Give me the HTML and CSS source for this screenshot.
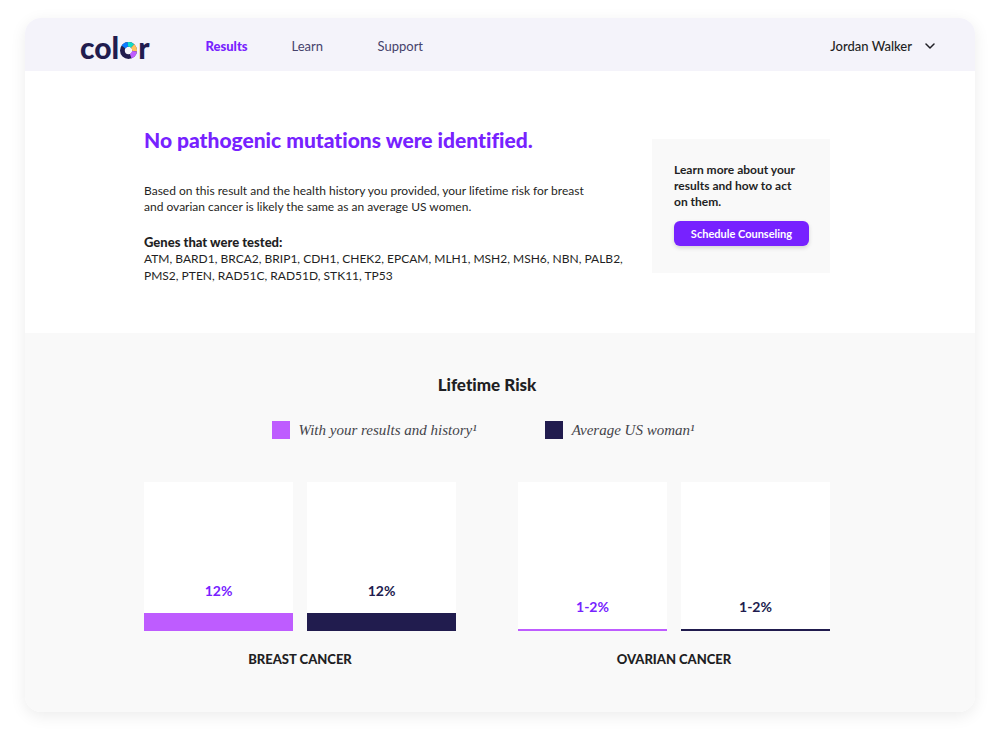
FILE: index.html
```html
<!DOCTYPE html>
<html lang="en">
<head>
    <meta charset="UTF-8">
    <meta name="viewport" content="width=device-width, initial-scale=1.0">
    <title>Color - Results</title>
    <link rel="stylesheet" href="styles.css">
</head>
<body>
    <div class="window">
        <header class="topbar">
            <a href="#" class="logo">
                <span>col</span>
                <svg class="logo-ring" viewBox="0 0 17 17" fill="none" stroke-width="4.8">
                    <circle cx="8.5" cy="8.5" r="6.1" stroke="#211c4e"/>
                    <path d="M3.5 5A6.1 6.1 0 0 1 7.9 2.43" stroke="#0a7cff"/>
                    <path d="M7.9 2.43A6.1 6.1 0 0 1 12.6 4" stroke="#12dcc8"/>
                    <path d="M12.6 4A6.1 6.1 0 0 1 14.55 9.3" stroke="#ffc25c"/>
                    <path d="M14.55 9.3A6.1 6.1 0 0 1 10.7 14.2" stroke="#c05cff"/>
                </svg>
                <span>r</span>
            </a>
            <nav class="nav">
                <a href="#" class="active">Results</a>
                <a href="#">Learn</a>
                <a href="#">Support</a>
            </nav>
            <button class="user" type="button">
                Jordan Walker
                <svg class="chevron" viewBox="0 0 10 6" fill="none" stroke="currentColor" stroke-width="1.5" stroke-linecap="round" stroke-linejoin="round">
                    <path d="M1 1l4 4 4-4"/>
                </svg>
            </button>
        </header>

        <section class="result">
            <div class="result-text">
                <h1>No pathogenic mutations were identified.</h1>
                <p>Based on this result and the health history you provided, your lifetime risk for breast<br> and ovarian cancer is likely the same as an average US women.</p>
                <h2>Genes that were tested:</h2>
                <p class="genes">ATM, BARD1, BRCA2, BRIP1, CDH1, CHEK2, EPCAM, MLH1, MSH2, MSH6, NBN, PALB2,<br> PMS2, PTEN, RAD51C, RAD51D, STK11, TP53</p>
            </div>
            <aside class="card">
                <p>Learn more about your results and how to act on them.</p>
                <button class="btn" type="button">Schedule Counseling</button>
            </aside>
        </section>

        <section class="risk">
            <h2>Lifetime Risk</h2>
            <ul class="legend">
                <li><span class="swatch yours"></span>With your results and history¹</li>
                <li><span class="swatch average"></span>Average US woman¹</li>
            </ul>
            <div class="charts">
                <figure>
                    <div class="tiles">
                        <div class="tile">
                            <span class="value">12%</span>
                            <div class="bar yours" style="height: 18px"></div>
                        </div>
                        <div class="tile">
                            <span class="value dark">12%</span>
                            <div class="bar average" style="height: 18px"></div>
                        </div>
                    </div>
                    <figcaption>BREAST CANCER</figcaption>
                </figure>
                <figure>
                    <div class="tiles">
                        <div class="tile">
                            <span class="value">1-2%</span>
                            <div class="bar yours" style="height: 2px"></div>
                        </div>
                        <div class="tile">
                            <span class="value dark">1-2%</span>
                            <div class="bar average" style="height: 2px"></div>
                        </div>
                    </div>
                    <figcaption>OVARIAN CANCER</figcaption>
                </figure>
            </div>
        </section>
    </div>
</body>
</html>
```
FILE: styles.css
```css
:root {
    --purple: #7722ff;
    --orchid: #be5cff;
    --navy: #211c4e;
    --ink: #1f1f24;
    --grey-bg: #f9f9f9;
}

* {
    margin: 0;
    padding: 0;
    box-sizing: border-box;
}

body {
    background: #fff;
    color: var(--ink);
    font-family: Lato, "Liberation Sans", sans-serif;
    font-size: 12px;
    font-variant-ligatures: none;
    line-height: 16px;
    padding: 18px 25px 31px;
}

a {
    text-decoration: none;
}

button {
    font-family: inherit;
    border: none;
    cursor: pointer;
}

.window {
    border-radius: 16px;
    overflow: hidden;
    box-shadow: 0 4px 16px rgba(0, 0, 0, 0.08);
}

/* Top bar */
.topbar {
    display: flex;
    align-items: center;
    height: 53px;
    padding: 0 40px 0 55px;
    background: #f4f3fa;
}

.logo {
    display: flex;
    align-items: baseline;
    color: var(--navy);
    font-size: 30px;
    font-weight: 900;
    line-height: 40px;
    padding-top: 4px;
}

.logo-ring {
    width: 17px;
    height: 17px;
    margin: 0 1px;
}

.nav {
    display: flex;
    margin-left: 56px;
    padding-top: 3px;
}

.nav a {
    width: 86px;
    color: #46426b;
    font-size: 13px;
}

.nav .active {
    color: var(--purple);
    font-weight: 900;
}

.user {
    display: flex;
    align-items: center;
    gap: 13px;
    margin-left: auto;
    padding-top: 3px;
    background: none;
    color: var(--ink);
    font-size: 13px;
    font-weight: 500;
}

.chevron {
    width: 10px;
    height: 6px;
}

/* Result */
.result {
    display: flex;
    justify-content: space-between;
    align-items: flex-start;
    padding: 59px 145px 49px 119px;
    background: #fff;
}

.result-text {
    width: 480px;
}

.result h1 {
    color: var(--purple);
    font-size: 21px;
    font-weight: 900;
    line-height: 20px;
    margin-bottom: 33px;
}

.result h2 {
    font-size: 13px;
    font-weight: 900;
    margin-top: 19px;
}

.genes {
    line-height: 17px;
}

.card {
    width: 178px;
    margin-top: 9px;
    padding: 23px 21px 27px 22px;
    background: var(--grey-bg);
}

.card p {
    max-width: 130px;
    font-weight: 700;
    margin-bottom: 11px;
}

.btn {
    width: 100%;
    height: 25px;
    border-radius: 6px;
    background: var(--purple);
    box-shadow: 0 2px 4px rgba(0, 0, 0, 0.15);
    color: #fff;
    font-size: 11px;
    font-weight: 700;
}

/* Lifetime risk */
.risk {
    padding: 42px 145px 45px 119px;
    background: var(--grey-bg);
}

.risk h2 {
    font-size: 17px;
    font-weight: 900;
    line-height: 20px;
    text-align: center;
}

.legend {
    display: flex;
    justify-content: center;
    gap: 68px;
    list-style: none;
    margin: 26px 0 43px;
    padding-right: 8px;
    color: #44444a;
    font-family: "Liberation Serif", serif;
    font-size: 15px;
    font-style: italic;
}

.legend li {
    display: flex;
    align-items: center;
}

.swatch {
    width: 18px;
    height: 18px;
    margin-right: 9px;
}

.yours {
    background: var(--orchid);
}

.average {
    background: var(--navy);
}

.charts {
    display: grid;
    grid-template-columns: 1fr 1fr;
    gap: 62px;
}

.tiles {
    display: grid;
    grid-template-columns: 1fr 1fr;
    gap: 14px;
}

.tile {
    display: flex;
    flex-direction: column;
    justify-content: flex-end;
    height: 149px;
    background: #fff;
}

.value {
    margin-bottom: 14px;
    color: var(--purple);
    font-size: 14px;
    font-weight: 700;
    text-align: center;
}

.value.dark {
    color: var(--navy);
}

figcaption {
    margin-top: 20px;
    font-size: 13px;
    font-weight: 900;
    text-align: center;
}
```
